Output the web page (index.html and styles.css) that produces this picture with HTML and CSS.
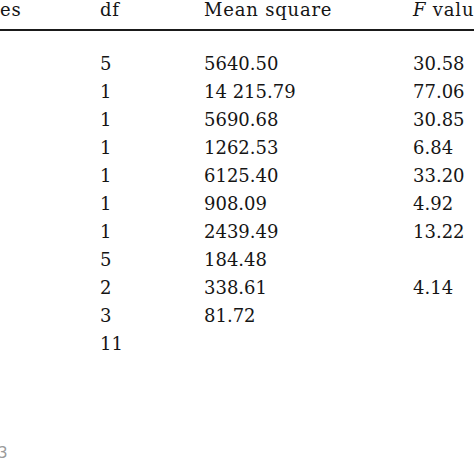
FILE: index.html
```
<!DOCTYPE html>
<html>
<head>
<meta charset="utf-8">
<link rel="stylesheet" href="styles.css">
</head>
<body>
<div class="page">
  <div class="table">
    <div class="row head">
      <div class="c1">es</div>
      <div class="c2">df</div>
      <div class="c3">Mean square</div>
      <div class="c4"><i>F</i> value</div>
    </div>
    <div class="body">
      <div class="row"><div class="c1"></div><div class="c2">5</div><div class="c3">5640.50</div><div class="c4">30.58</div></div>
      <div class="row"><div class="c1"></div><div class="c2">1</div><div class="c3">14 215.79</div><div class="c4">77.06</div></div>
      <div class="row"><div class="c1"></div><div class="c2">1</div><div class="c3">5690.68</div><div class="c4">30.85</div></div>
      <div class="row"><div class="c1"></div><div class="c2">1</div><div class="c3">1262.53</div><div class="c4">6.84</div></div>
      <div class="row"><div class="c1"></div><div class="c2">1</div><div class="c3">6125.40</div><div class="c4">33.20</div></div>
      <div class="row"><div class="c1"></div><div class="c2">1</div><div class="c3">908.09</div><div class="c4">4.92</div></div>
      <div class="row"><div class="c1"></div><div class="c2">1</div><div class="c3">2439.49</div><div class="c4">13.22</div></div>
      <div class="row"><div class="c1"></div><div class="c2">5</div><div class="c3">184.48</div><div class="c4"></div></div>
      <div class="row"><div class="c1"></div><div class="c2">2</div><div class="c3">338.61</div><div class="c4">4.14</div></div>
      <div class="row"><div class="c1"></div><div class="c2">3</div><div class="c3">81.72</div><div class="c4"></div></div>
      <div class="row"><div class="c1"></div><div class="c2">11</div><div class="c3"></div><div class="c4"></div></div>
    </div>
  </div>
  <div class="footer">3</div>
</div>
</body>
</html>
```
FILE: styles.css
```
html, body {
  margin: 0;
  padding: 0;
  background: #fff;
}
.page {
  width: 474px;
  height: 474px;
  overflow: hidden;
  font-family: "DejaVu Serif", serif;
  font-size: 18px;
  color: #151515;
}
.row {
  display: grid;
  grid-template-columns: 100px 104px 209px 80px;
  height: 28px;
  line-height: 28px;
  white-space: nowrap;
}
.row.head {
  height: 20px;
  line-height: 20px;
  padding-bottom: 9px;
  border-bottom: 2px solid #1a1a1a;
  letter-spacing: 0.8px;
}
.body {
  padding-top: 19px;
}
.footer {
  margin-top: 88px;
  margin-left: -2px;
  font-family: "DejaVu Sans", sans-serif;
  font-size: 15px;
  line-height: 15px;
  color: #9a9a9a;
}
```
